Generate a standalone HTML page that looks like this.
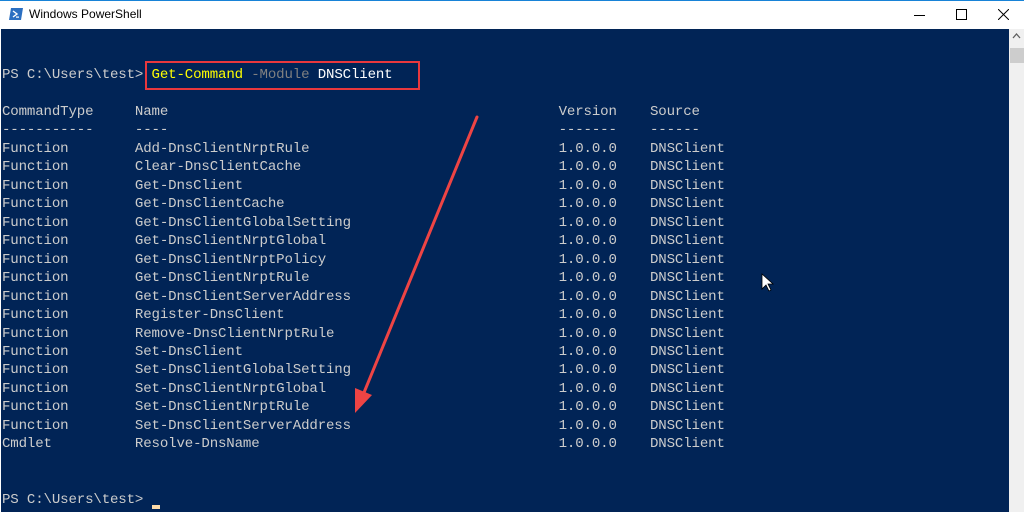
<!DOCTYPE html>
<html><head><meta charset="utf-8"><style>
html,body{margin:0;padding:0;width:1024px;height:512px;overflow:hidden;background:#fff;}
#title{position:absolute;left:0;top:0;width:1024px;height:29px;background:#fff;border-top:1px solid #1883d7;box-sizing:border-box;}
#title .t{position:absolute;left:29px;top:6px;font:12px "Liberation Sans",sans-serif;color:#000;}
#con{position:absolute;left:1px;top:29px;width:1008px;height:483px;background:#012456;}
#sb{position:absolute;left:1009px;top:29px;width:15px;height:483px;background:#f0f0f0;}
#thumb{position:absolute;left:1010px;top:48px;width:14px;height:15px;background:#cdcdcd;}
pre{position:absolute;left:2px;top:29px;margin:0;font:14.1px/18.47px "Liberation Mono",monospace;letter-spacing:-0.15px;color:#cccccc;}
.y{color:#ffff00}.g{color:#808080}.w{color:#fff}
</style></head><body>
<div id="title">
<svg style="position:absolute;left:9px;top:7px" width="14" height="12"><polygon points="2,0 14,0 12,12 0,12" fill="#2b6fc1"/><path d="M4,3 L8,6 L4,9" stroke="#fff" stroke-width="1.4" fill="none"/><rect x="7" y="8.5" width="3" height="1.2" fill="#fff"/></svg>
<span class="t">Windows PowerShell</span>
<div style="position:absolute;left:914px;top:14px;width:11px;height:1px;background:#000"></div>
<div style="position:absolute;left:956px;top:8px;width:9px;height:9px;border:1px solid #000"></div>
<svg style="position:absolute;left:998px;top:8px" width="11" height="11"><path d="M0,0L11,11M11,0L0,11" stroke="#000" stroke-width="1"/></svg>
</div>
<div id="con"></div>
<div id="sb"></div>
<svg style="position:absolute;left:1012px;top:33px" width="9" height="6"><path d="M1,5L4.5,1L8,5" stroke="#606060" stroke-width="1.3" fill="none"/></svg>
<div id="thumb"></div>
<pre>
 
 
PS C:\Users\test&gt; <span class="y">Get-Command</span> <span class="g">-Module</span> <span class="w">DNSClient</span>

CommandType     Name                                               Version    Source
-----------     ----                                               -------    ------
Function        Add-DnsClientNrptRule                              1.0.0.0    DNSClient
Function        Clear-DnsClientCache                               1.0.0.0    DNSClient
Function        Get-DnsClient                                      1.0.0.0    DNSClient
Function        Get-DnsClientCache                                 1.0.0.0    DNSClient
Function        Get-DnsClientGlobalSetting                         1.0.0.0    DNSClient
Function        Get-DnsClientNrptGlobal                            1.0.0.0    DNSClient
Function        Get-DnsClientNrptPolicy                            1.0.0.0    DNSClient
Function        Get-DnsClientNrptRule                              1.0.0.0    DNSClient
Function        Get-DnsClientServerAddress                         1.0.0.0    DNSClient
Function        Register-DnsClient                                 1.0.0.0    DNSClient
Function        Remove-DnsClientNrptRule                           1.0.0.0    DNSClient
Function        Set-DnsClient                                      1.0.0.0    DNSClient
Function        Set-DnsClientGlobalSetting                         1.0.0.0    DNSClient
Function        Set-DnsClientNrptGlobal                            1.0.0.0    DNSClient
Function        Set-DnsClientNrptRule                              1.0.0.0    DNSClient
Function        Set-DnsClientServerAddress                         1.0.0.0    DNSClient
Cmdlet          Resolve-DnsName                                    1.0.0.0    DNSClient


PS C:\Users\test&gt;</pre>
<div style="position:absolute;left:152px;top:505px;width:8px;height:4px;background:#fedba9"></div>
<div style="position:absolute;left:145px;top:61px;width:271px;height:25px;border:2px solid #e8383d"></div>
<svg style="position:absolute;left:0;top:0" width="1024" height="512">
<line x1="477" y1="117" x2="363" y2="395" stroke="#ee4444" stroke-width="3" stroke-linecap="round"/>
<polygon points="355,413 355,388 372,395" fill="#ee4444"/>
<polygon points="762,274 762,289 766,285 769,291 771,290 768,284 773,284" fill="#fff" stroke="#000" stroke-width="0.8"/>
</svg>
</body></html>
